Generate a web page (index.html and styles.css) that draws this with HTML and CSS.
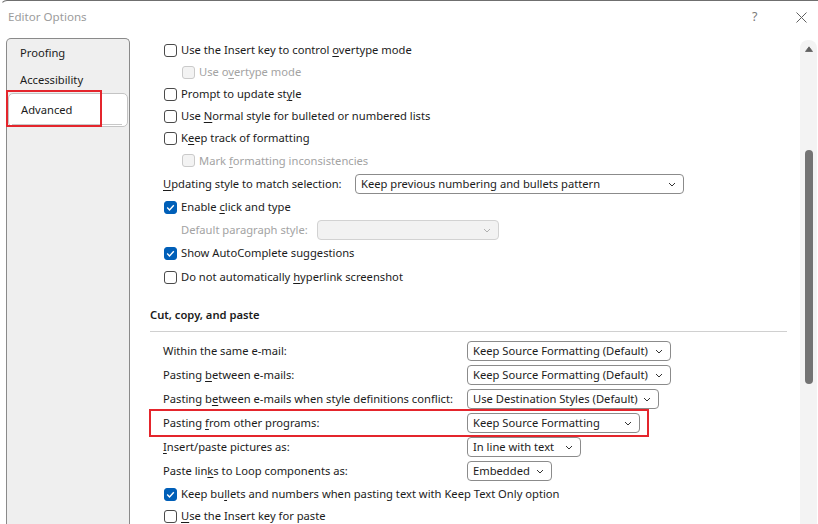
FILE: index.html
```html
<!DOCTYPE html>
<html>
<head>
<meta charset="utf-8">
<link rel="stylesheet" href="styles.css">
</head>
<body>
<div class="window">
  <div class="titlebar">
    <span class="title">Editor Options</span>
    <span class="help">?</span>
    <span class="close"><svg width="11" height="11" viewBox="0 0 11 11"><path d="M0.5 0.5 L10.5 10.5 M10.5 0.5 L0.5 10.5" stroke="#606060" stroke-width="1" fill="none"/></svg></span>
  </div>
  <div class="main">
    <nav class="nav">
      <div class="nav-item">Proofing</div>
      <div class="nav-item">Accessibility</div>
      <div class="nav-item selected">Advanced</div>
      <div class="highlight hl-nav"></div>
    </nav>
    <div class="content">
      <div class="row h22"><span class="cb"></span><span>Use the Insert key to control <u>o</u>vertype mode</span></div>
      <div class="row h22 sub"><span class="cb disabled"></span><span class="dim">Use o<u>v</u>ertype mode</span></div>
      <div class="row h22"><span class="cb"></span><span>Prompt to update st<u>y</u>le</span></div>
      <div class="row h22"><span class="cb"></span><span>Use <u>N</u>ormal style for bulleted or numbered lists</span></div>
      <div class="row h22"><span class="cb"></span><span>K<u>e</u>ep track of formatting</span></div>
      <div class="row h23 sub"><span class="cb disabled"></span><span class="dim">Mark <u>f</u>ormatting inconsistencies</span></div>
      <div class="row h24 lbl"><span class="label-upd"><u>U</u>pdating style to match selection:</span><span class="dd w329"><span>Keep previous numbering and bullets pattern</span><svg class="chev" width="8" height="5" viewBox="0 0 8 5"><path d="M1 1 L4 4 L7 1" stroke="#333" fill="none"/></svg></span></div>
      <div class="row h22"><span class="cb checked"><svg width="13" height="13" viewBox="0 0 13 13"><path d="M3.2 6.6 L5.5 8.9 L9.8 4.3" stroke="#fff" stroke-width="1.4" fill="none"/></svg></span><span>Enable <u>c</u>lick and type</span></div>
      <div class="row h24 sublbl"><span class="label-def dim">Default paragraph style:</span><span class="dd w182 dd-disabled"><span></span><svg class="chev" width="8" height="5" viewBox="0 0 8 5"><path d="M1 1 L4 4 L7 1" stroke="#b0b0b0" fill="none"/></svg></span></div>
      <div class="row h22"><span class="cb checked"><svg width="13" height="13" viewBox="0 0 13 13"><path d="M3.2 6.6 L5.5 8.9 L9.8 4.3" stroke="#fff" stroke-width="1.4" fill="none"/></svg></span><span>Show AutoComplete suggestions</span></div>
      <div class="row h26"><span class="cb"></span><span>Do not automatically <u>h</u>yperlink screenshot</span></div>

      <div class="section-title">Cut, copy, and paste</div>
      <div class="sep"></div>

      <div class="grid">
        <div class="grow"><span>Within the same e-mail:</span><span class="dd w204"><span>Keep Source Formatting (Default)</span><svg class="chev" width="8" height="5" viewBox="0 0 8 5"><path d="M1 1 L4 4 L7 1" stroke="#333" fill="none"/></svg></span></div>
        <div class="grow"><span>Pasting <u>b</u>etween e-mails:</span><span class="dd w204"><span>Keep Source Formatting (Default)</span><svg class="chev" width="8" height="5" viewBox="0 0 8 5"><path d="M1 1 L4 4 L7 1" stroke="#333" fill="none"/></svg></span></div>
        <div class="grow"><span>Pasting b<u>e</u>tween e-mails when style definitions conflict:</span><span class="dd w192"><span>Use Destination Styles (Default)</span><svg class="chev" width="8" height="5" viewBox="0 0 8 5"><path d="M1 1 L4 4 L7 1" stroke="#333" fill="none"/></svg></span></div>
        <div class="grow marked"><span>Pasting <u>f</u>rom other programs:</span><span class="dd w173"><span>Keep Source Formatting</span><svg class="chev" width="8" height="5" viewBox="0 0 8 5"><path d="M1 1 L4 4 L7 1" stroke="#333" fill="none"/></svg></span><div class="highlight hl-row"></div></div>
        <div class="grow"><span><u>I</u>nsert/paste pictures as:</span><span class="dd w114"><span>In line with text</span><svg class="chev" width="8" height="5" viewBox="0 0 8 5"><path d="M1 1 L4 4 L7 1" stroke="#333" fill="none"/></svg></span></div>
        <div class="grow"><span>Paste lin<u>k</u>s to Loop components as:</span><span class="dd w85"><span>Embedded</span><svg class="chev" width="8" height="5" viewBox="0 0 8 5"><path d="M1 1 L4 4 L7 1" stroke="#333" fill="none"/></svg></span></div>
      </div>
      <div class="row h22 r2"><span class="cb checked"><svg width="13" height="13" viewBox="0 0 13 13"><path d="M3.2 6.6 L5.5 8.9 L9.8 4.3" stroke="#fff" stroke-width="1.4" fill="none"/></svg></span><span>Keep bu<u>l</u>lets and numbers when pasting text with Keep Text Only option</span></div>
      <div class="row h22"><span class="cb"></span><span><u>U</u>se the Insert key for paste</span></div>
    </div>
    <div class="scrollbar">
      <svg class="arrow" width="8" height="6" viewBox="0 0 8 6"><path d="M0.5 5.5 L4 0.8 L7.5 5.5 Z" fill="#606060" stroke="#606060" stroke-width="0.8" stroke-linejoin="round"/></svg>
      <div class="thumb"></div>
    </div>
  </div>
</div>
</body>
</html>
```
FILE: styles.css
```css
* { box-sizing: border-box; }
html, body { margin: 0; padding: 0; background: #fff; }
body {
  font-family: "Noto Sans", "Open Sans", sans-serif;
  font-size: 11.2px;
  color: #1b1b1b;
  width: 818px;
  height: 524px;
  overflow: hidden;
}
u { text-decoration-thickness: 1px; text-underline-offset: 2px; }

.window {
  width: 818px;
  height: 524px;
  border-top: 1px solid #6f6f6f;
  border-left: 1px solid transparent;
  border-top-left-radius: 7px;
  display: flex;
  flex-direction: column;
  overflow: hidden;
}

.titlebar {
  height: 30px;
  display: flex;
  align-items: center;
  padding-left: 7px;
  flex: none;
}
.title { color: #9c9c9c; font-size: 11.6px; flex: 1; }
.help { color: #7a7a7a; font-size: 12.5px; width: 44px; text-align: left; }
.close { width: 22px; display: flex; align-items: center; padding-top: 2px; }

.main {
  flex: 1;
  display: flex;
  padding-top: 7px;
  min-height: 0;
}

.nav {
  position: relative;
  margin-left: 5px;
  width: 124px;
  flex: none;
  background: #efefef;
  border: 1px solid #8a8a8a;
  border-bottom: none;
  border-radius: 5px 5px 0 0;
  padding-top: 0;
}
.nav-item {
  height: 27px;
  display: flex;
  align-items: center;
  padding-left: 13px;
  padding-bottom: 1px;
  color: #1b1b1b;
}
.nav-item.selected {
  position: relative;
  height: 34px;
  margin: 0 1px 0 1px;
  background: #fff;
  border: 1px solid #c4c4c4;
  border-radius: 5px;
  padding-left: 12px;
}
.nav-item.selected::after {
  content: "";
  position: absolute;
  left: 3px;
  right: 5px;
  bottom: 1px;
  height: 1px;
  background: #c8c8c8;
}

.highlight {
  position: absolute;
  border: 2px solid #e4252c;
  pointer-events: none;
}
.hl-nav { left: -1px; top: 51px; width: 96px; height: 37px; }

.content {
  flex: 1;
  padding-left: 20px;
  padding-top: 1px;
  margin-right: 13px;
  min-width: 0;
}

.row {
  display: flex;
  align-items: center;
  padding-left: 14px;
  white-space: nowrap;
}
.row > span:last-child { padding-bottom: 1px; }
.row.sub { padding-left: 32px; }
.row.lbl { padding-left: 13px; }
.row.sublbl { padding-left: 31px; }
.h22 { height: 22px; }
.h23 { height: 23px; }
.h24 { height: 24px; }
.h26 { height: 26px; }

.cb {
  width: 13px;
  height: 13px;
  border: 1px solid #4a4a4a;
  border-radius: 3px;
  background: #fff;
  margin-right: 4px;
  flex: none;
  display: flex;
  align-items: center;
  justify-content: center;
}
.row > .cb:last-child { padding-bottom: 0; }
.cb.disabled { border-color: #cacaca; background: #f3f3f3; }
.cb.checked { background: #005fb8; border-color: #005fb8; }
.cb.checked svg { margin: -1px; }
.dim { color: #a3a3a3; }

.label-upd { width: 192px; flex: none; padding-bottom: 1px; }
.label-def { width: 136px; flex: none; padding-bottom: 1px; }

.dd {
  height: 20px;
  border: 1px solid #8b8b8b;
  border-radius: 4px;
  display: flex;
  align-items: center;
  justify-content: space-between;
  padding: 0 7px 1px 5px;
  background: #fff;
  flex: none;
}
.row > .dd:last-child { padding-bottom: 1px; }
.dd-disabled { background: #f2f2f2; border-color: #d2d2d2; }
.chev { flex: none; margin-top: 1px; }
.w329 { width: 329px; }
.w182 { width: 182px; }
.w204 { width: 204px; }
.w192 { width: 192px; }
.w173 { width: 173px; }
.w114 { width: 114px; }
.w85 { width: 85px; }

.section-title {
  margin-top: 14px;
  height: 22px;
  display: flex;
  align-items: center;
  padding-bottom: 1px;
  font-weight: 600;
}
.sep {
  margin-top: 5px;
  height: 1px;
  background: #d0d0d0;
}

.grid {
  margin-top: 7px;
  display: flex;
  flex-direction: column;
}
.grow {
  position: relative;
  height: 24px;
  display: grid;
  grid-template-columns: 304px auto;
  justify-content: start;
  align-items: center;
  padding-left: 13px;
  white-space: nowrap;
}
.grow > span:first-child { padding-bottom: 1px; }
.hl-row { left: -1px; top: -2px; width: 500px; height: 28px; }

.scrollbar {
  width: 17px;
  margin-top: 2px;
  margin-right: 1px;
  background: #f3f3f3;
  border-radius: 8px 8px 0 0;
  display: flex;
  flex-direction: column;
  align-items: center;
  flex: none;
}
.arrow { margin-top: 6px; flex: none; }
.thumb {
  margin-top: 98px;
  width: 8px;
  height: 234px;
  background: #737373;
  border-radius: 4px;
  margin-left: 1px;
}
```
